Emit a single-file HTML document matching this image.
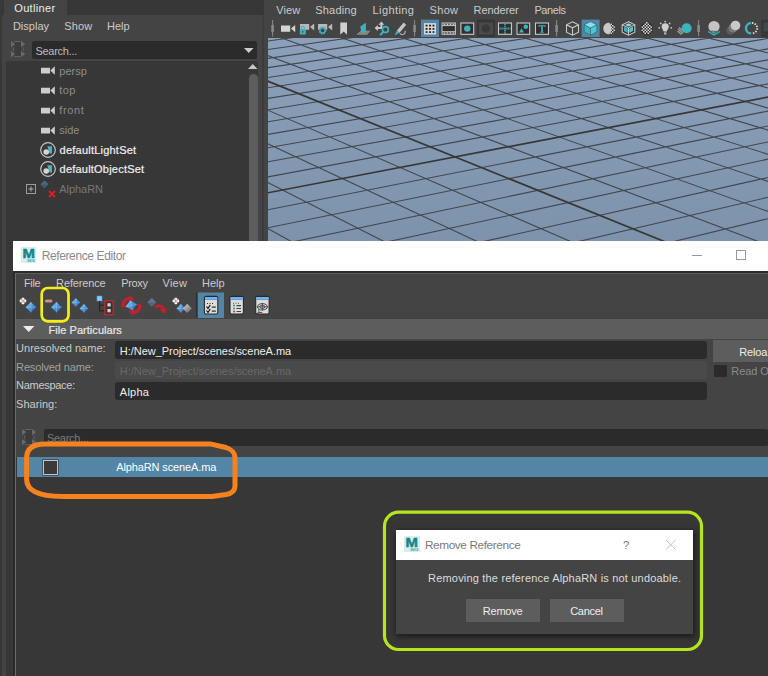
<!DOCTYPE html>
<html><head><meta charset="utf-8"><title>Reference Editor</title>
<style>
html,body{margin:0;padding:0;}
body{width:768px;height:676px;overflow:hidden;background:#444;position:relative;font-family:"Liberation Sans",sans-serif;font-size:11px;color:#ddd;}
.abs{position:absolute;}
.t{position:absolute;white-space:nowrap;line-height:14px;}
svg{position:absolute;display:block;overflow:visible;}
#grid{left:268px;top:38px;overflow:hidden;}
</style></head><body>
<!-- main window top strip / tab -->
<div class="abs" style="left:0;top:0;width:768px;height:15px;background:#373737"></div>
<div class="abs" style="left:0;top:0;width:2px;height:676px;background:#383838"></div>
<div class="abs" style="left:4px;top:0;width:63px;height:16px;background:#444"></div>
<div class="abs" style="left:262px;top:15px;width:2px;height:230px;background:#3c3c3c"></div>
<div class="t" style="left:14.3px;top:1.06px;font-size:11px;color:#eee;letter-spacing:0.323px;">Outliner</div>
<div class="t" style="left:12.9px;top:19.06px;font-size:11px;color:#cbcbcb;letter-spacing:0.019px;">Display</div>
<div class="t" style="left:64.3px;top:19.06px;font-size:11px;color:#cbcbcb;letter-spacing:0.121px;">Show</div>
<div class="t" style="left:107.1px;top:19.06px;font-size:11px;color:#cbcbcb;letter-spacing:-0.031px;">Help</div>
<div class="abs" style="left:32.4px;top:41px;width:224.6px;height:17.6px;background:#2b2b2b;border-radius:2.5px"></div>
<svg style="left:243.5px;top:47.5px" width="10" height="6"><path d="M0 0H9.5L4.75 5Z" fill="#ccc"/></svg>
<svg style="left:10.9px;top:41px" width="15" height="17" viewBox="0 0 15 17"><rect x="3.5" y="1.2" width="6.6" height="13.8" fill="#3c3c3c"/><path d="M0 0L4.3 3.1L0 6.2ZM10 0L14.3 3.1L10 6.2ZM0 10L4.3 13.1L0 16.2ZM10 10L14.3 13.1L10 16.2Z" fill="#686868"/><path d="M3.2 .5H9.4M3.2 15.6H9.4" stroke="#646464" stroke-width="1"/><path d="M2.5 6.4V10.2M12.3 6.4V10.2" stroke="#5c5c5c" stroke-width="1"/></svg>
<div class="abs" style="left:6px;top:61px;width:252px;height:615px;background:#373737"></div>
<svg style="left:248px;top:64px" width="10" height="6"><path d="M0 5H9.5L4.75 0Z" fill="#c8c8c8"/></svg>
<div class="abs" style="left:248.5px;top:74px;width:9.7px;height:180px;background:#5d5d5d;border-radius:5px 5px 0 0"></div>
<div class="t" style="left:35.4px;top:44.06px;font-size:11px;color:#bbb;letter-spacing:-0.258px;">Search...</div>
<svg style="left:41px;top:66.2px" width="14" height="9" viewBox="0 0 14 9"><path d="M0 1.7H9V7.4H0Z M9.3 4.5L13.8 0.3V8.8Z" fill="#cdcdcd"/></svg>
<div class="t" style="left:59.3px;top:63.56px;font-size:11px;color:#8c8c8c;letter-spacing:-0.003px;">persp</div>
<svg style="left:41px;top:85.7px" width="14" height="9" viewBox="0 0 14 9"><path d="M0 1.7H9V7.4H0Z M9.3 4.5L13.8 0.3V8.8Z" fill="#cdcdcd"/></svg>
<div class="t" style="left:59.3px;top:83.06px;font-size:11px;color:#8c8c8c;letter-spacing:0.436px;">top</div>
<svg style="left:41px;top:105.5px" width="14" height="9" viewBox="0 0 14 9"><path d="M0 1.7H9V7.4H0Z M9.3 4.5L13.8 0.3V8.8Z" fill="#cdcdcd"/></svg>
<div class="t" style="left:59.3px;top:102.86px;font-size:11px;color:#8c8c8c;letter-spacing:0.598px;">front</div>
<svg style="left:41px;top:125.5px" width="14" height="9" viewBox="0 0 14 9"><path d="M0 1.7H9V7.4H0Z M9.3 4.5L13.8 0.3V8.8Z" fill="#cdcdcd"/></svg>
<div class="t" style="left:59.3px;top:122.86px;font-size:11px;color:#8c8c8c;letter-spacing:-0.045px;">side</div>
<svg style="left:40.3px;top:141.7px" width="16" height="16" viewBox="0 0 16 16"><circle cx="8" cy="8" r="7.3" fill="none" stroke="#c4c4c4" stroke-width="1.2"/><path d="M7.3 4.2H12V11.6H9.5Z" fill="#4ab4c0"/><circle cx="6.2" cy="10" r="2.8" fill="#d4d4d4"/></svg>
<div class="t" style="left:59.6px;top:142.86px;font-size:11px;color:#eee;letter-spacing:0.221px;-webkit-text-stroke:.22px #eee;">defaultLightSet</div>
<svg style="left:40.3px;top:161.2px" width="16" height="16" viewBox="0 0 16 16"><circle cx="8" cy="8" r="7.3" fill="none" stroke="#c4c4c4" stroke-width="1.2"/><path d="M7.3 4.2H12V11.6H9.5Z" fill="#4ab4c0"/><circle cx="6.2" cy="10" r="2.8" fill="#d4d4d4"/></svg>
<div class="t" style="left:59.6px;top:162.36px;font-size:11px;color:#eee;letter-spacing:0.211px;-webkit-text-stroke:.22px #eee;">defaultObjectSet</div>
<svg style="left:26px;top:184px" width="10" height="10" viewBox="0 0 10 10"><rect x="0.5" y="0.5" width="9" height="9" fill="none" stroke="#9c9c9c"/><path d="M2.5 5H7.5M5 2.5V7.5" stroke="#b4b4b4"/></svg>
<svg style="left:40px;top:180px" width="17" height="18" viewBox="0 0 17 18"><path d="M4.5 0.5L8.5 4.5L4.5 8.5L0.5 4.5Z" fill="#3e5a73"/><path d="M4.5 0.5L8.5 4.5H0.5Z" fill="#4a6884"/><path d="M9 11L15 17M15 11L9 17" stroke="#e01a22" stroke-width="2"/></svg>
<div class="t" style="left:59.3px;top:182.06px;font-size:11px;color:#787878;letter-spacing:-0.06px;">AlphaRN</div>
<!-- viewport panel -->
<div class="abs" style="left:264px;top:0;width:504px;height:245px;background:#444"></div>
<div class="abs" style="left:268px;top:38px;width:500px;height:204px;background:linear-gradient(#8ba1bb,#7d93ab)"></div>
<svg id="grid" width="500" height="204" viewBox="0 0 500 204"><path d="M-5 -4.4L-0.9 -5 M-5 3.7L57.6 -5 M-5 12.2L116.4 -5 M-5 21.1L175.3 -5 M-5 30.4L234.4 -5 M-5 40.2L293.6 -5 M-5 50.5L353.1 -5 M-5 61.2L412.7 -5 M-5 72.6L472.5 -5 M-5 84.6L505 -0.4 M-5 187.9L33.2 209 M-5 97.2L505 10 M-5 142.2L126.9 209 M-5 110.6L505 21 M-5 103.5L221 209 M-5 124.7L505 32.6 M-5 70.1L315.3 209 M-5 139.8L505 45 M-5 15.8L504.7 209 M-5 172.7L505 72.1 M-0.5 -5L505 175.2 M-5 190.8L505 87 M59.1 -5L505 145 M0.5 209L505 102.9 M118.9 -5L505 117.9 M95.7 209L505 120 M178.9 -5L505 93.6 M191.2 209L505 138.4 M239 -5L505 71.5 M287 209L505 158.1 M299.3 -5L505 51.4 M383.1 209L505 179.5 M359.8 -5L505 33 M479.5 209L505 202.6 M420.5 -5L505 16.2 M481.4 -5L505 0.7" stroke="#42474d" stroke-width="1.1" fill="none"/><path d="M-5 41.2L409.9 209 M-5 155.7L505 58.1" stroke="#393636" stroke-width="1.7" fill="none"/></svg><svg style="left:0;top:0" width="768" height="45" viewBox="0 0 768 45">
<g id="seps" fill="#8a8a8a"><path d="M272.1 20h1v5h.8v7h-.8v4.5h-1V32h-.8v-7h.8z"/><path d="M414.1 20h1v5h.8v7h-.8v4.5h-1V32h-.8v-7h.8z"/><path d="M556.1 20h1v5h.8v7h-.8v4.5h-1V32h-.8v-7h.8z"/><path d="M698.1 20h1v5h.8v7h-.8v4.5h-1V32h-.8v-7h.8z"/></g>
<!-- cameras -->
<path d="M281 25.5h9.2v6.2H281z M291 28.6L295.2 25v7.2z" fill="#d4d4d4"/>
<path d="M300 24h9.2v5.8H300z M310 27L314.2 23.4v7.2z" fill="#b8b8b8"/>
<rect x="299.8" y="29" width="6" height="5.5" fill="#3eb3c0"/><path d="M301.3 29.5v-1.7a1.5 1.5 0 0 1 3 0v1.7" fill="none" stroke="#3eb3c0" stroke-width="1.1"/><rect x="302.3" y="30.8" width="1" height="2" fill="#444"/>
<path d="M318 24h9.2v5.8H318z M328 27L332.2 23.4v7.2z" fill="#b8b8b8"/>
<circle cx="322.6" cy="30.5" r="3" fill="#444" stroke="#3eb3c0" stroke-width="1.8" stroke-dasharray="1.6 0.75"/><circle cx="322.6" cy="30.5" r="2.6" fill="none" stroke="#3eb3c0" stroke-width="1.1"/>
<!-- bookmark -->
<path d="M340.3 22.5h6.7v12.3l-3.35-3.3-3.35 3.3z" fill="#d0d0d0"/>
<!-- image plane -->
<path d="M356.3 34.8L361 30.8h9.3L367 34.8z" fill="#9a9a9a"/><path d="M358.5 34.8l4.2-4M361.5 34.8l4.2-4M364.5 34.8l4.2-4" stroke="#555" stroke-width=".8"/><path d="M360.3 26.6L365.9 22.7v8.3L361.6 34z" fill="#3eb3c0"/>
<!-- 2d pan zoom -->
<path d="M374.6 28l3.2-2.9v1.9h2.6v-2.2h-1.9l2.9-3.2 2.9 3.2h-1.9v4.2h-4.6v1.9z" fill="#c8c8c8"/>
<circle cx="385.4" cy="29.6" r="3" fill="none" stroke="#3eb3c0" stroke-width="1.7"/><path d="M383.3 31.9l-3.2 3" stroke="#3eb3c0" stroke-width="2"/>
<!-- grease pencil -->
<path d="M396.8 30.8L403.6 22.6l2.6 2.1-6.8 8.2z" fill="#c4c4c4"/><path d="M396.6 31l2.6 2.1-4.6 2.3z" fill="#3eb3c0"/><path d="M400 33.3c1.2 2.2 5.3 2 5.3-2.6" fill="none" stroke="#b0b0b0" stroke-width="1.1"/>
<!-- grid toggle -->
<rect x="421" y="19.6" width="18" height="17.4" fill="#5285a6"/>
<rect x="424.8" y="23.9" width="10.4" height="9.8" fill="#222" stroke="#d8d8d8" stroke-width="1.6"/><path d="M428.3 23.9v9.8M431.8 23.9v9.8M424.8 27.2h10.4M424.8 30.5h10.4" stroke="#d8d8d8" stroke-width="1.5"/>
<!-- film gate -->
<rect x="442" y="23" width="13.4" height="11.3" fill="#2f2f2f" stroke="#c8c8c8" stroke-width="1"/><path d="M442 25.6h13.4M442 31.7h13.4" stroke="#c8c8c8" stroke-width="1"/><path d="M443.5 24.3h12M443.5 33h12" stroke="#c8c8c8" stroke-width="1.4" stroke-dasharray="1.8 1.2"/>
<!-- resolution gate -->
<rect x="460.9" y="23" width="12.8" height="11.3" fill="#2f2f2f" stroke="#c8c8c8" stroke-width="1.1"/><circle cx="467.3" cy="28.6" r="3.2" fill="#3eb3c0"/>
<!-- disabled -->
<rect x="477" y="19.6" width="17.8" height="17.4" fill="#373737"/><rect x="479" y="22.5" width="14" height="12" fill="#4a4a4a"/><circle cx="486" cy="28.5" r="4.3" fill="#3a3a3a"/>
<!-- field chart -->
<rect x="498.5" y="23" width="13" height="11.3" fill="#2f2f2f" stroke="#c8c8c8" stroke-width="1.1"/><path d="M499.5 28.6h11" stroke="#3eb3c0" stroke-width="2" stroke-dasharray="1.2 .8"/><path d="M505 23.5v10.3" stroke="#3eb3c0" stroke-width="1.6" stroke-dasharray="1.4 .8"/>
<!-- safe action -->
<rect x="517" y="23" width="12.7" height="11.3" fill="#2f2f2f" stroke="#c8c8c8" stroke-width="1.1"/><circle cx="525.8" cy="26.8" r="2.3" fill="#3eb3c0"/><path d="M519 32.5l2.5-4.2 2.5 4.2z" fill="#3eb3c0"/>
<!-- safe title -->
<rect x="535.5" y="23" width="13" height="11.3" fill="#2f2f2f" stroke="#c8c8c8" stroke-width="1.1"/><path d="M538.5 25.2h7v1.8h-.8l-.3-.8h-1.6v5.6l1 .3v.6h-3.6v-.6l1-.3v-5.6h-1.6l-.3.8h-.8z" fill="#3eb3c0"/>
<!-- wire cube -->
<path d="M572.5 21.8l6 3v7.4l-6 3-6-3v-7.4z M566.5 24.8l6 3 6-3M572.5 27.8v7.4" fill="none" stroke="#c8c8c8" stroke-width="1.1"/>
<!-- shaded cube selected -->
<rect x="581.6" y="19.6" width="18" height="17.4" fill="#5285a6"/>
<path d="M590.5 21.6l6.3 3.2-6.3 3.2-6.3-3.2z" fill="#86e0ea"/><path d="M584.2 24.8l6.3 3.2v7.2l-6.3-3.2z" fill="#3eb3c0"/><path d="M596.8 24.8l-6.3 3.2v7.2l6.3-3.2z" fill="#4cc6d2"/><path d="M590.5 21.6l6.3 3.2v7.2l-6.3 3.2-6.3-3.2v-7.2z M584.2 24.8l6.3 3.2 6.3-3.2M590.5 28v7.2" fill="none" stroke="#2a5a66" stroke-width=".6"/>
<!-- half checker sphere -->
<circle cx="609.2" cy="28.5" r="6" fill="#2b2b2b"/><path d="M610.5 23.5h1.5v1.5h-1.5zM609 25h1.5v1.5h-1.5zM612 25h1.5v1.5h-1.5zM610.5 26.5h1.5v1.5h-1.5zM613.5 26.5h1.5v1.5h-1.5zM609 28h1.5v1.5h-1.5zM612 28h1.5v1.5h-1.5zM610.5 29.5h1.5v1.5h-1.5zM613.5 29.5h1.5v1.5h-1.5zM609 31h1.5v1.5h-1.5zM612 31h1.5v1.5h-1.5zM610.5 32.5h1.5v1.5h-1.5z" fill="#d8d8d8"/><path d="M609.2 22.5a6 6 0 0 0 0 12a9 9 0 0 0 0-12z" fill="#c8c8c8"/>
<!-- wire+shaded cube -->
<path d="M628.5 21.8l6.3 3v7.4l-6.3 3-6.3-3v-7.4z" fill="#2f2f2f" stroke="#c8c8c8" stroke-width="1.1"/><path d="M628.5 23.2l3.6 1.7-3.6 1.7-3.6-1.7z" fill="#86e0ea"/><path d="M624 26.5l3.8 1.9v4.6l-3.8-1.9z" fill="#3eb3c0"/><path d="M633 26.5l-3.8 1.9v4.6l3.8-1.9z" fill="#4cc6d2"/><path d="M622.2 24.8l6.3 3 6.3-3M628.5 27.8v7.4" fill="none" stroke="#c8c8c8" stroke-width="1"/>
<!-- checker sphere -->
<circle cx="646.7" cy="28.5" r="6.2" fill="#2b2b2b"/><path d="M646 22h1.5v1.5h-1.5zM644.5 23.5h1.5v1.5h-1.5zM647.5 23.5h1.5v1.5h-1.5zM643 25h1.5v1.5h-1.5zM646 25h1.5v1.5h-1.5zM649 25h1.5v1.5h-1.5zM641.5 26.5h1.5v1.5h-1.5zM644.5 26.5h1.5v1.5h-1.5zM647.5 26.5h1.5v1.5h-1.5zM650.5 26.5h1.5v1.5h-1.5zM643 28h1.5v1.5h-1.5zM646 28h1.5v1.5h-1.5zM649 28h1.5v1.5h-1.5zM641.5 29.5h1.5v1.5h-1.5zM644.5 29.5h1.5v1.5h-1.5zM647.5 29.5h1.5v1.5h-1.5zM650.5 29.5h1.5v1.5h-1.5zM643 31h1.5v1.5h-1.5zM646 31h1.5v1.5h-1.5zM649 31h1.5v1.5h-1.5zM644.5 32.5h1.5v1.5h-1.5zM647.5 32.5h1.5v1.5h-1.5z" fill="#d8d8d8"/>
<!-- light bulb -->
<path d="M665.2 23.2a3.6 3.6 0 0 1 3.6 3.6c0 2-1.7 2.8-2 4.8h-3.2c-.3-2-2-2.8-2-4.8a3.6 3.6 0 0 1 3.6-3.6z" fill="#d0d0d0"/><rect x="664" y="32.3" width="2.4" height="2.2" fill="#b0b0b0"/>
<g fill="#c8c8c8"><circle cx="665.2" cy="21.6" r=".9"/><circle cx="660.8" cy="23.4" r=".9"/><circle cx="669.6" cy="23.4" r=".9"/><circle cx="659.2" cy="27.8" r=".9"/><circle cx="671.2" cy="27.8" r=".9"/></g>
<!-- shadow ball -->
<path d="M678 29l5 4.5M679 27.5l5 4.5M677.5 31l4 3.5" stroke="#a0a0a0" stroke-width="1.2"/><circle cx="686.6" cy="28.2" r="5" fill="#3eb3c0"/>
<!-- AO -->
<path d="M708 31.5l6 3.5 6-3.5M710 30.5l4 2.5 4-2.5" fill="none" stroke="#3eb3c0" stroke-width="1.1"/><circle cx="714" cy="26.5" r="5.6" fill="#c4c4c4"/><path d="M710 30.5l1.5 1.5.8-1.3 1.5 1.5.8-1.3 1.5 1.3.8-1.5" fill="none" stroke="#444" stroke-width=".8"/>
<!-- motion blur -->
<circle cx="730.5" cy="30.5" r="4.3" fill="#5a5a5a"/><circle cx="733" cy="28" r="4.5" fill="#7a7a7a"/><circle cx="735.5" cy="25.5" r="4.8" fill="#c8c8c8"/>
<!-- ring -->
<path d="M751.2 23a5.2 5.2 0 0 0 0 10.4" fill="none" stroke="#3eb3c0" stroke-width="2.4"/><path d="M752 23a5.2 5.2 0 0 1 0 10.4" fill="none" stroke="#d8d8d8" stroke-width="1.8" stroke-dasharray="1.5 1.2"/>
<rect x="761.3" y="19.8" width="6.7" height="17.2" fill="#373737"/><rect x="763.5" y="22.5" width="4.5" height="9" fill="#3f4a4c"/>
</svg>
<div class="t" style="left:276.3px;top:2.66px;font-size:11px;color:#cbcbcb;letter-spacing:0.089px;">View</div>
<div class="t" style="left:315.3px;top:2.66px;font-size:11px;color:#cbcbcb;letter-spacing:0.176px;">Shading</div>
<div class="t" style="left:372.6px;top:2.66px;font-size:11px;color:#cbcbcb;letter-spacing:0.396px;">Lighting</div>
<div class="t" style="left:429.6px;top:2.66px;font-size:11px;color:#cbcbcb;letter-spacing:0.296px;">Show</div>
<div class="t" style="left:473.6px;top:2.66px;font-size:11px;color:#cbcbcb;letter-spacing:-0.108px;">Renderer</div>
<div class="t" style="left:534.4px;top:2.66px;font-size:11px;color:#cbcbcb;letter-spacing:-0.406px;">Panels</div>
<!-- Reference Editor window -->
<div class="abs" style="left:13px;top:241px;width:755px;height:435px;background:#444"></div>
<div class="abs" style="left:13px;top:241px;width:755px;height:30px;background:#fff"></div>
<div class="abs" style="left:13px;top:271px;width:755px;height:2px;background:#2b2b2b"></div>
<div class="abs" style="left:13px;top:271px;width:2px;height:405px;background:#2b2b2b"></div>
<div class="abs" style="left:15px;top:273px;width:753px;height:1px;background:#5c5c5c"></div>
<div class="abs" style="left:15px;top:273px;width:1px;height:403px;background:#6a6a6a"></div>
<div class="abs" style="left:20.9px;top:247.2px;width:15.6px;height:15.6px;background:#d9eeee"></div><div class="t" style="left:20.9px;top:246.9px;width:15.6px;text-align:center;font-size:13.5px;line-height:14px;font-weight:bold;color:#14868a;-webkit-text-stroke:.5px #14868a;transform:scaleX(1.1);">M</div><div class="t" style="left:27.2px;top:259.5px;font-size:2.6px;line-height:3px;font-weight:bold;color:#2aa7a7;letter-spacing:0.1px">MAYA</div>
<div class="t" style="left:41.7px;top:248.93px;font-size:12px;color:#8a8a8a;letter-spacing:-0.384px;">Reference Editor</div>
<div class="abs" style="left:692px;top:255px;width:10px;height:1px;background:#999"></div>
<div class="abs" style="left:736px;top:250px;width:10px;height:10px;border:1px solid #999;box-sizing:border-box"></div>
<div class="t" style="left:23.9px;top:276.06px;font-size:11px;color:#cbcbcb;letter-spacing:-0.331px;">File</div>
<div class="t" style="left:56.1px;top:276.06px;font-size:11px;color:#cbcbcb;letter-spacing:-0.139px;">Reference</div>
<div class="t" style="left:121.3px;top:276.06px;font-size:11px;color:#cbcbcb;letter-spacing:-0.364px;">Proxy</div>
<div class="t" style="left:162.6px;top:276.06px;font-size:11px;color:#cbcbcb;letter-spacing:0.214px;">View</div>
<div class="t" style="left:202.1px;top:276.06px;font-size:11px;color:#cbcbcb;letter-spacing:-0.031px;">Help</div>
<svg style="left:0;top:284px" width="280" height="40" viewBox="0 284 280 40">
<defs>
<linearGradient id="dg" x1="0" y1="0" x2="1" y2="1"><stop offset="0" stop-color="#a8d6f6"/><stop offset=".45" stop-color="#4d9be0"/><stop offset="1" stop-color="#1f5a9c"/></linearGradient>
<linearGradient id="gg" x1="0" y1="0" x2="1" y2="1"><stop offset="0" stop-color="#d8d8d8"/><stop offset=".5" stop-color="#9a9a9a"/><stop offset="1" stop-color="#5a5a5a"/></linearGradient>
</defs>
<!-- 1 create ref -->
<g transform="translate(23 300.9)"><path d="M-.8-2.7h1.6v1.9h1.9v1.6h-1.9v1.9h-1.6v-1.9h-1.9v-1.6h1.9z" fill="#e8414f" stroke="#fff" stroke-width="1.1" stroke-linejoin="round"/></g><g transform="translate(30.9 307.2)"><path d="M0-5.2L5.2 0 0 5.2-5.2 0z" fill="url(#dg)"/><path d="M0-5.2L0 5.2M-5.2 0H5.2" stroke="#bfe0fa" stroke-width=".5" opacity=".6"/></g>
<!-- 2 remove ref -->
<rect x="45.6" y="300" width="6.2" height="2.1" rx=".6" fill="#ea6a78" stroke="#f4d0d4" stroke-width=".5"/><g transform="translate(56.5 307.2)"><path d="M0-5.2L5.2 0 0 5.2-5.2 0z" fill="url(#dg)"/><path d="M0-5.2L0 5.2M-5.2 0H5.2" stroke="#bfe0fa" stroke-width=".5" opacity=".6"/></g>
<!-- 3 two diamonds -->
<g transform="translate(75.9 302.5)"><path d="M0-4.3L4.3 0 0 4.3-4.3 0z" fill="url(#dg)"/><path d="M0-4.3L0 4.3M-4.3 0H4.3" stroke="#bfe0fa" stroke-width=".5" opacity=".5"/></g><g transform="translate(84 308.4)"><path d="M0-4.3L4.3 0 0 4.3-4.3 0z" fill="url(#dg)"/><path d="M0-4.3L0 4.3M-4.3 0H4.3" stroke="#bfe0fa" stroke-width=".5" opacity=".5"/></g>
<!-- 4 hierarchy -->
<rect x="97" y="296" width="5" height="5" fill="#8ccaf6" stroke="#4d9be0" stroke-width=".6"/>
<path d="M99.6 301v9.9h5M99.6 305.3h5" fill="none" stroke="#262626" stroke-width="1.1"/>
<rect x="104.9" y="300.9" width="8.3" height="13.8" fill="#3a3030" stroke="#c62828" stroke-width="1.3"/>
<rect x="107.4" y="303.2" width="3.3" height="3.3" fill="#d0d0d0"/><rect x="107.4" y="309" width="3.3" height="3.3" fill="#d0d0d0"/>
<!-- 5 reload -->
<path d="M123.6 307.2c-1.6-4.2 1.2-8.6 6.4-8.8" fill="none" stroke="#c4202c" stroke-width="3.2"/><path d="M129 295l5.6 4.3-5.6 3.3z" fill="#c4202c"/>
<path d="M139.4 303.8c1.6 4.2-1.2 8.4-6.4 8.6" fill="none" stroke="#c4202c" stroke-width="3.2"/><path d="M134 315.8l-5.6-4.3 5.6-3.3z" fill="#c4202c"/>
<g transform="translate(131.3 305.4) rotate(-12)"><path d="M0-5L5.8 0 0 5-5.8 0z" fill="url(#dg)"/><path d="M0-5L0 5M-5.8 0H5.8" stroke="#bfe0fa" stroke-width=".5" opacity=".6"/></g>
<!-- 6 unload -->
<path d="M151.8 298L156.3 302.5 151.8 307 147.3 302.5z" fill="#4f667c"/><path d="M151.8 298L156.3 302.5H147.3z" fill="#5f788f"/>
<path d="M155.3 307.2c3.6-2.8 7.8-1 8.3 3" fill="none" stroke="#c4202c" stroke-width="3"/><path d="M159.8 309.3l7.2-1-2.7 6z" fill="#c4202c"/>
<!-- 7 -->
<g transform="translate(175.9 300.9)"><path d="M-.8-2.7h1.6v1.9h1.9v1.6h-1.9v1.9h-1.6v-1.9h-1.9v-1.6h1.9z" fill="#e8414f" stroke="#fff" stroke-width="1.1" stroke-linejoin="round"/></g><g transform="translate(180.9 308.4)"><path d="M0-4.3L4.3 0 0 4.3-4.3 0z" fill="url(#dg)"/><path d="M0-4.3L0 4.3M-4.3 0H4.3" stroke="#bfe0fa" stroke-width=".5" opacity=".5"/></g><path d="M187.3 303.8L191.9 308.4 187.3 313 182.7 308.4z" fill="url(#gg)"/>
<!-- sep + selected -->
<rect x="195.8" y="292.7" width="1" height="25" fill="#2e2e2e"/>
<rect x="198" y="292.5" width="26" height="25.5" fill="#5285a6"/>
<g transform="translate(204.4 296.4)"><rect x="0" y="0" width="13.4" height="17.6" rx="1.6" fill="#dcdcdc" stroke="#2a2a2a" stroke-width="1.1"/><path d="M.6 1.6a1 1 0 0 1 1-1h10.2a1 1 0 0 1 1 1v2.1H.6z" fill="#5aa0e4"/><path d="M.6 1.7h12.2" stroke="#9cc8f4" stroke-width=".9"/></g>
<path d="M207 303.5h1M209.5 303.5h1M212 303.5h1" stroke="#333" stroke-width="1"/>
<path d="M206.5 306.5l1.5 2 2.2-3.5M206.5 310.5l1.5 2 2.2-3.5" fill="none" stroke="#111" stroke-width="1.2"/><path d="M211.8 307.2h4M211.8 311.2h4" stroke="#333" stroke-width="1.2"/>
<g transform="translate(230 296.4)"><rect x="0" y="0" width="13.4" height="17.6" rx="1.6" fill="#dcdcdc" stroke="#2a2a2a" stroke-width="1.1"/><path d="M.6 1.6a1 1 0 0 1 1-1h10.2a1 1 0 0 1 1 1v2.1H.6z" fill="#5aa0e4"/><path d="M.6 1.7h12.2" stroke="#9cc8f4" stroke-width=".9"/></g>
<path d="M233 303.3h1M235.5 303.3h1M238 303.3h1" stroke="#555" stroke-width="1"/>
<circle cx="234" cy="305.6" r="1" fill="#2aa52a"/><circle cx="234" cy="308.5" r="1" fill="#3a7fd0"/><circle cx="234" cy="311.5" r="1" fill="#d02a2a"/><path d="M236.5 305.6h4.5M236.5 308.5h4.5M236.5 311.5h4.5" stroke="#444" stroke-width="1.2"/>
<g transform="translate(255.7 296.4)"><rect x="0" y="0" width="13.4" height="17.6" rx="1.6" fill="#dcdcdc" stroke="#2a2a2a" stroke-width="1.1"/><path d="M.6 1.6a1 1 0 0 1 1-1h10.2a1 1 0 0 1 1 1v2.1H.6z" fill="#5aa0e4"/><path d="M.6 1.7h12.2" stroke="#9cc8f4" stroke-width=".9"/></g>
<ellipse cx="262.4" cy="306.8" rx="5" ry="3.2" fill="none" stroke="#333" stroke-width=".9"/><ellipse cx="262.4" cy="306.8" rx="2.6" ry="1.6" fill="none" stroke="#333" stroke-width=".8"/><path d="M257 306.8h11M262.4 303v7.5" stroke="#333" stroke-width=".7"/>
<path d="M258.8 312.5v-3.5" stroke="#2aa52a" stroke-width="1.2"/><path d="M258.8 312.5h3.5" stroke="#d02a2a" stroke-width="1.2"/><path d="M258.8 312.5l-1.8 1.2" stroke="#2a3ad0" stroke-width="1.2"/>
</svg>
<div class="abs" style="left:16px;top:319px;width:752px;height:19.5px;background:#5d5d5d"></div>
<svg style="left:22.5px;top:325.5px" width="12" height="7"><path d="M0 0H11.4L5.7 6Z" fill="#eee"/></svg>
<div class="t" style="left:48.6px;top:322.76px;font-size:11px;color:#e6e6e6;letter-spacing:0.035px;-webkit-text-stroke:.22px #e6e6e6;">File Particulars</div>
<div class="t" style="left:16.1px;top:341.16px;font-size:11px;color:#cbcbcb;letter-spacing:0.014px;">Unresolved name:</div>
<div class="t" style="left:16.1px;top:359.86px;font-size:11px;color:#a0a0a0;letter-spacing:-0.142px;">Resolved name:</div>
<div class="t" style="left:16.1px;top:378.16px;font-size:11px;color:#cbcbcb;letter-spacing:-0.295px;">Namespace:</div>
<div class="t" style="left:16.1px;top:397.36px;font-size:11px;color:#cbcbcb;letter-spacing:0.028px;">Sharing:</div>
<div class="abs" style="left:115px;top:340.5px;width:592px;height:18px;background:#2b2b2b;border-radius:3px"></div>
<div class="abs" style="left:115px;top:361px;width:592px;height:18px;background:#4a4a4a;border-radius:3px"></div>
<div class="abs" style="left:115px;top:382px;width:592px;height:17.5px;background:#2b2b2b;border-radius:3px"></div>
<div class="abs" style="left:713px;top:340px;width:55px;height:22px;background:#5d5d5d"></div>
<div class="abs" style="left:714px;top:364.5px;width:13px;height:12.5px;background:#2b2b2b;border-radius:1px"></div>
<div class="t" style="left:119.85px;top:344.36px;font-size:11px;color:#eee;letter-spacing:-0.037px;">H:/New_Project/scenes/sceneA.ma</div>
<div class="t" style="left:119.85px;top:363.86px;font-size:11px;color:#686868;letter-spacing:-0.037px;">H:/New_Project/scenes/sceneA.ma</div>
<div class="t" style="left:119.85px;top:384.86px;font-size:11px;color:#eee;letter-spacing:0.223px;">Alpha</div>
<div class="t" style="left:739.2px;top:345.06px;font-size:11px;color:#eee;letter-spacing:-0.148px;">Reloa</div>
<div class="t" style="left:731.35px;top:364.36px;font-size:11px;color:#8a8a8a;letter-spacing:-0.11px;">Read O</div>
<!-- ref list -->
<div class="abs" style="left:44px;top:429px;width:724px;height:17px;background:#2b2b2b;border-radius:2px"></div>
<svg style="left:22.3px;top:428.8px" width="15" height="17" viewBox="0 0 15 17"><rect x="3.5" y="1.2" width="6.6" height="13.8" fill="#3c3c3c"/><path d="M0 0L4.3 3.1L0 6.2ZM10 0L14.3 3.1L10 6.2ZM0 10L4.3 13.1L0 16.2ZM10 10L14.3 13.1L10 16.2Z" fill="#686868"/><path d="M3.2 .5H9.4M3.2 15.6H9.4" stroke="#646464" stroke-width="1"/><path d="M2.5 6.4V10.2M12.3 6.4V10.2" stroke="#5c5c5c" stroke-width="1"/></svg>
<div class="abs" style="left:16px;top:457px;width:752px;height:219px;background:#373737"></div>
<div class="abs" style="left:17px;top:457px;width:751px;height:20px;background:#5285a6"></div>
<div class="abs" style="left:42.5px;top:459.5px;width:15.5px;height:15px;background:#3a3a3a;border:1px solid #c4c4c4;box-sizing:border-box;box-shadow:0 0 0 .6px #333"></div>
<div class="t" style="left:46.9px;top:430.66px;font-size:11px;color:#7c7c7c;letter-spacing:-0.258px;">Search...</div>
<div class="t" style="left:116.2px;top:459.66px;font-size:11px;color:#fff;letter-spacing:-0.124px;">AlphaRN sceneA.ma</div>
<!-- annotations -->
<svg style="left:0;top:0" width="768" height="676"><path d="M45 443.9H210L226 447.5C232 449.5 235 452 235 458V486C235 491 232 493.5 226 494.5L212 496.4H62C36 496.4 26.6 490 26.6 479V458C26.6 448 33 443.9 45 443.9Z" fill="none" stroke="#f6821f" stroke-width="5" stroke-linejoin="round"/>
<rect x="384.5" y="512.2" width="317" height="137.3" rx="14" fill="none" stroke="#b5e61d" stroke-width="3.2"/>
<rect x="41.7" y="288" width="26.8" height="33.3" rx="6" fill="none" stroke="#f2ee1a" stroke-width="2.7"/></svg>
<!-- dialog -->
<div class="abs" style="left:396px;top:530px;width:297px;height:103.5px;background:#444;box-shadow:1px 2px 6px 1px rgba(0,0,0,.5)"></div>
<div class="abs" style="left:396px;top:530px;width:297px;height:29.7px;background:#fff"></div>
<div class="abs" style="left:404.3px;top:536.2px;width:15.6px;height:15.6px;background:#d9eeee"></div><div class="t" style="left:404.3px;top:535.9px;width:15.6px;text-align:center;font-size:13.5px;line-height:14px;font-weight:bold;color:#14868a;-webkit-text-stroke:.5px #14868a;transform:scaleX(1.1);">M</div><div class="t" style="left:410.6px;top:548.5px;font-size:2.6px;line-height:3px;font-weight:bold;color:#2aa7a7;letter-spacing:0.1px">MAYA</div>
<div class="t" style="left:424.9px;top:537.6px;font-size:11.8px;color:#7a7a7a;letter-spacing:-0.388px;">Remove Reference</div>
<div class="t" style="left:622.9px;top:537.53px;font-size:11.4px;color:#777;letter-spacing:-0.44px;">?</div>
<svg style="left:665.5px;top:539.5px" width="10" height="10"><path d="M0 0L9.5 9.5M9.5 0L0 9.5" stroke="#c4c4c4" stroke-width="1"/></svg>
<div class="abs" style="left:466px;top:599px;width:74px;height:23px;background:#5d5d5d"></div>
<div class="abs" style="left:550px;top:599px;width:74px;height:23px;background:#5d5d5d"></div>
<div class="t" style="left:428.1px;top:570.56px;font-size:11px;color:#ddd;letter-spacing:0.183px;">Removing the reference AlphaRN is not undoable.</div>
<div class="t" style="left:482.85px;top:603.86px;font-size:11px;color:#eee;letter-spacing:-0.235px;">Remove</div>
<div class="t" style="left:570.2px;top:603.86px;font-size:11px;color:#eee;letter-spacing:-0.29px;">Cancel</div>
</body></html>
